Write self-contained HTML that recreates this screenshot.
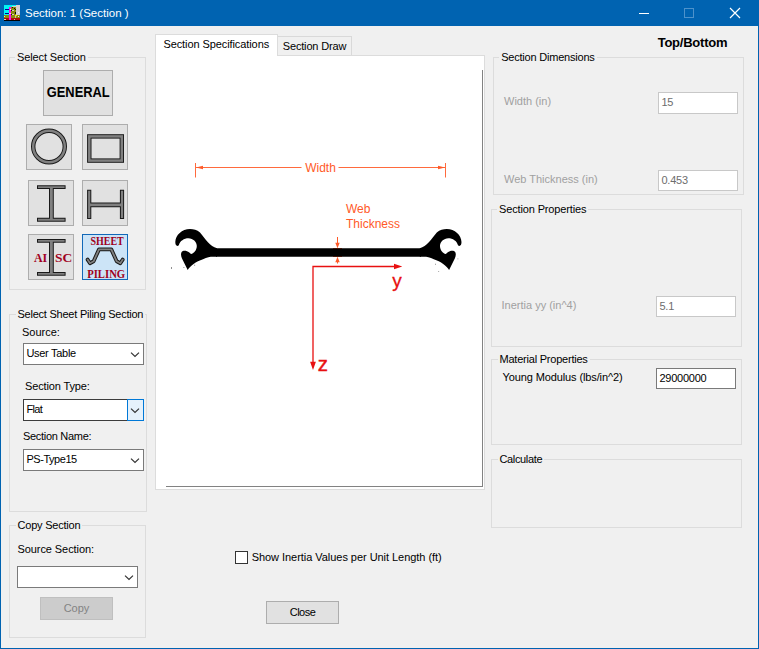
<!DOCTYPE html>
<html><head><meta charset="utf-8"><title>Section: 1 (Section )</title>
<style>
*{box-sizing:border-box;margin:0;padding:0}
html,body{width:759px;height:649px;overflow:hidden;background:#f0f0f0}
body{position:relative;font-family:"Liberation Sans",sans-serif;font-size:11px;color:#000}
.abs{position:absolute}
#titlebar{left:0;top:0;width:759px;height:26px;background:#0063b1}
#title{left:25px;top:5px;color:#fff;font-size:11.5px;white-space:nowrap;line-height:16px}
#bl{left:0;top:26px;width:1px;height:623px;background:#0063b1}
#br{right:0;top:26px;width:1px;height:623px;background:#0063b1}
#bb{left:0;bottom:0;width:759px;height:1px;background:#0063b1}
.grp{position:absolute;border:1px solid #dcdcdc}
.grp>.lg{position:absolute;left:6px;top:-8px;background:#f0f0f0;padding:0 2px;white-space:nowrap;line-height:14px}
.lbl{position:absolute;white-space:nowrap;line-height:14px}
.dis{color:#a0a0a0}
.btn{position:absolute;background:#e1e1e1;border:1px solid #adadad}
.combo{position:absolute;background:#fff;border:1px solid #7a7a7a;height:22px;line-height:19px;padding-left:3px;white-space:nowrap}
.combo svg{position:absolute;right:3.500px;top:8.300px}
.tb{position:absolute;background:#fff;border:1px solid #c8c8c8;height:21px;line-height:18px;padding-left:2.5px;color:#6d6d6d;letter-spacing:-0.25px}
</style></head><body>
<div id="titlebar" class="abs"></div>
<svg class="abs" id="appicon" style="left:4px;top:5px" width="16" height="16" viewBox="0 0 16 16" shape-rendering="crispEdges">
<rect width="16" height="16" fill="#d6cfd0"/>
<rect x="0" y="0" width="12" height="1" fill="#00f0f0"/>
<rect x="0" y="1" width="5" height="9" fill="#00f6f6"/>
<rect x="5" y="1" width="3" height="1" fill="#00f0f0"/>
<rect x="7" y="2" width="5" height="8" fill="#8a8a10"/>
<rect x="8" y="2" width="1" height="1" fill="#101000"/><rect x="10" y="3" width="1" height="1" fill="#101000"/><rect x="11" y="4" width="1" height="1" fill="#101000"/><rect x="7" y="5" width="1" height="1" fill="#101000"/><rect x="11" y="7" width="1" height="2" fill="#101000"/><rect x="7" y="9" width="1" height="1" fill="#101000"/>
<rect x="8" y="5" width="2" height="1" fill="#d8d0c0"/><rect x="8" y="9" width="2" height="1" fill="#d8d0c0"/>
<rect x="1" y="4" width="4" height="1" fill="#000090"/><rect x="1" y="8" width="4" height="1" fill="#000090"/>
<rect x="0" y="10" width="16" height="3" fill="#8c8a10"/>
<rect x="11" y="10" width="2" height="1" fill="#f0f000"/>
<rect x="0" y="11" width="1" height="1" fill="#e0e0c0"/><rect x="14" y="11" width="1" height="1" fill="#e8e8e8"/><rect x="14" y="7" width="1" height="1" fill="#f4f4f4"/><rect x="11" y="11" width="1" height="3" fill="#c8c8a0"/>
<rect x="0" y="13" width="16" height="2" fill="#b00808"/>
<rect x="0" y="14" width="2" height="1" fill="#e0d0c0"/><rect x="10" y="14" width="1" height="1" fill="#d0c0a0"/>
<rect x="5" y="2" width="2" height="13" fill="#ff10e0"/>
<rect x="6" y="4" width="1" height="1" fill="#fff"/><rect x="5" y="8" width="2" height="1" fill="#ffc0f0"/>
<rect x="0" y="15" width="16" height="1" fill="#000"/>
</svg>
<div id="title" class="abs">Section: 1 (Section )</div>
<svg class="abs" style="left:630px;top:0" width="129" height="26" viewBox="0 0 129 26">
<path d="M9 13.5H19" stroke="#fff" stroke-width="1"/>
<rect x="54.5" y="8.5" width="9" height="9" fill="none" stroke="#4d92cb" stroke-width="1"/>
<path d="M100 8L110 18M110 8L100 18" stroke="#fff" stroke-width="1.2"/>
</svg>
<div id="bl" class="abs"></div><div id="br" class="abs"></div><div id="bb" class="abs"></div>

<!-- Select Section -->
<div class="grp" id="g1" style="left:9px;top:57px;width:137px;height:233px"><span class="lg" style="letter-spacing:-0.115px;left:5px">Select Section</span></div>
<div class="btn" id="bgen" style="left:43px;top:70px;width:70px;height:46px;text-align:center;line-height:44px;font-weight:bold;font-size:14px;line-height:43px"><span style="display:inline-block;transform:scaleX(0.92)">GENERAL</span></div>
<div class="btn" id="bcirc" style="left:26px;top:124px;width:46px;height:46px"><svg width="44" height="44"><circle cx="22" cy="21.500" r="15.800" fill="none" stroke="#1a1a1a" stroke-width="4.400"/><circle cx="22" cy="21.500" r="15.800" fill="none" stroke="#808080" stroke-width="2.500"/></svg></div>
<div class="btn" id="brect" style="left:82px;top:124px;width:46px;height:46px"><svg width="44" height="44"><rect x="6.300" y="11.400" width="32.500" height="24.200" fill="none" stroke="#1a1a1a" stroke-width="4.400"/><rect x="6.300" y="11.400" width="32.500" height="24.200" fill="none" stroke="#808080" stroke-width="2.500"/></svg></div>
<div class="btn" id="bI" style="left:28px;top:180px;width:46px;height:46px"><svg width="44" height="44"><path d="M8 6.100H36.600M8 38.800H36.600" fill="none" stroke="#1a1a1a" stroke-width="3.900"/><path d="M22.400 6V39" fill="none" stroke="#1a1a1a" stroke-width="4.800"/><path d="M9 6.100H35.600M9 38.800H35.600" fill="none" stroke="#808080" stroke-width="1.900"/><path d="M22.400 6V39" fill="none" stroke="#808080" stroke-width="2.800"/></svg></div>
<div class="btn" id="bH" style="left:82px;top:180px;width:46px;height:46px"><svg width="44" height="44"><path d="M6.200 8.800V38M39 8.800V38" fill="none" stroke="#1a1a1a" stroke-width="4.200"/><path d="M6.200 23.900H39" fill="none" stroke="#1a1a1a" stroke-width="4.800"/><path d="M6.200 9.800V37M39 9.800V37" fill="none" stroke="#808080" stroke-width="2.200"/><path d="M6.200 23.900H39" fill="none" stroke="#808080" stroke-width="2.800"/></svg></div>
<div class="btn" id="baisc" style="left:28px;top:234px;width:46px;height:46px"><svg width="44" height="44"><path d="M8 5.900H36.600M8 38.900H36.600" fill="none" stroke="#1a1a1a" stroke-width="3.900"/><path d="M22.400 6V39" fill="none" stroke="#1a1a1a" stroke-width="4.800"/><path d="M9 5.900H35.600M9 38.900H35.600" fill="none" stroke="#808080" stroke-width="1.900"/><path d="M22.400 6V39" fill="none" stroke="#808080" stroke-width="2.800"/><text x="5" y="27.200" textLength="13.2" lengthAdjust="spacingAndGlyphs" font-family="Liberation Serif,serif" font-weight="bold" font-size="13.5" fill="#a00020">AI</text><text x="26" y="27.200" textLength="17.2" lengthAdjust="spacingAndGlyphs" font-family="Liberation Serif,serif" font-weight="bold" font-size="13.5" fill="#a00020">SC</text></svg></div>
<div class="btn" id="bsheet" style="left:82px;top:234px;width:46px;height:46px;background:#cce4f7;border-color:#1268b8"><svg width="44" height="44"><text x="7.400" y="9.700" textLength="33.400" lengthAdjust="spacingAndGlyphs" font-family="Liberation Serif,serif" font-weight="bold" font-size="11.5" fill="#a00020">SHEET</text><text x="4.200" y="42.500" textLength="38" lengthAdjust="spacingAndGlyphs" font-family="Liberation Serif,serif" font-weight="bold" font-size="11.5" fill="#a00020">PILING</text><path d="M4.600 24.600 L7 28.200 L10.600 26.300 L16 14.400 L28.300 14.400 L33.700 26.300 L37.300 28.200 L39.700 24.600" fill="none" stroke="#1a1a1a" stroke-width="3.800" stroke-linecap="round" stroke-linejoin="round"/><path d="M4.600 24.600 L7 28.200 L10.600 26.300 L16 14.400 L28.300 14.400 L33.700 26.300 L37.300 28.200 L39.700 24.600" fill="none" stroke="#808080" stroke-width="1.800" stroke-linecap="round" stroke-linejoin="round"/></svg></div>

<!-- Select Sheet Piling Section -->
<div class="grp" id="g2" style="left:9px;top:314px;width:138px;height:198px"><span class="lg" style="letter-spacing:-0.235px;left:5.5px">Select Sheet Piling Section</span></div>
<div class="lbl" id="lsrc" style="left:22px;top:325px">Source:</div>
<div class="combo" id="c1" style="left:23px;top:343px;width:121px;letter-spacing:-0.29px;padding-left:2.4px">User Table<svg width="10" height="6"><path d="M1 0.600L5 4.500L9 0.600" fill="none" stroke="#333" stroke-width="1.200"/></svg></div>
<div class="lbl" id="ltype" style="left:25px;top:379px;letter-spacing:-0.14px">Section Type:</div>
<div class="combo" id="c2" style="left:23px;top:399px;width:121px;border-color:#3c3c3c;letter-spacing:-0.6px;padding-left:2.4px">Flat<span class="abs" style="right:-1px;top:-1px;width:17px;height:22px;background:#e5f1fb;border:1px solid #0078d7"></span><svg width="10" height="6"><path d="M1 0.600L5 4.500L9 0.600" fill="none" stroke="#333" stroke-width="1.200"/></svg></div>
<div class="lbl" id="lname" style="left:23px;top:429px;letter-spacing:-0.3px">Section Name:</div>
<div class="combo" id="c3" style="left:23px;top:449px;width:121px;letter-spacing:-0.45px;padding-left:2.4px">PS-Type15<svg width="10" height="6"><path d="M1 0.600L5 4.500L9 0.600" fill="none" stroke="#333" stroke-width="1.200"/></svg></div>

<!-- Copy Section -->
<div class="grp" id="g3" style="left:9px;top:525px;width:137px;height:113px"><span class="lg" style="letter-spacing:-0.21px;left:5.5px">Copy Section</span></div>
<div class="lbl" id="lss" style="left:17px;top:542px;letter-spacing:-0.08px;left:17.5px">Source Section:</div>
<div class="combo" id="c4" style="left:17px;top:566px;width:121px"><svg width="10" height="6"><path d="M1 0.600L5 4.500L9 0.600" fill="none" stroke="#333" stroke-width="1.200"/></svg></div>
<div class="btn" id="bcopy" style="left:40px;top:597px;width:73px;height:23px;background:#cccccc;border-color:#bfbfbf;color:#838383;text-align:center;line-height:21px">Copy</div>

<!-- Tabs -->
<div class="abs" id="tabpage" style="left:155px;top:55px;width:330px;height:435px;background:#fff;border:1px solid #dcdcdc"></div>
<div class="abs" id="tab2" style="left:276px;top:36px;width:76px;height:19px;background:#f0f0f0;border:1px solid #d9d9d9;border-bottom:none;text-align:center;line-height:18px;letter-spacing:-0.16px;padding-left:1px">Section Draw</div>
<div class="abs" id="tab1" style="left:155px;top:34px;width:123px;height:22px;background:#fff;border:1px solid #dcdcdc;border-bottom:none;text-align:center;line-height:18.5px;letter-spacing:-0.086px;padding-right:0.5px">Section Specifications</div>
<div class="abs" style="left:482px;top:70px;width:1px;height:417px;background:#828282"></div>
<div class="abs" style="left:166px;top:486px;width:317px;height:1px;background:#828282"></div>

<!-- Diagram -->
<svg class="abs" id="diagram" style="left:156px;top:56px" width="326" height="430" viewBox="156 56 326 430">
<g stroke="#ff6a3d" stroke-width="1" fill="none">
<path d="M195.500 163V177.500M445.500 163V177.500M196 167.500H301.500M338.500 167.500H445"/>
</g>
<path d="M196 167.500l7-1.800v3.600zM445 167.500l-7-1.800v3.600z" fill="#ff5a28"/>
<text x="320.500" y="172" text-anchor="middle" font-size="12" fill="#ff5a28" font-family="Liberation Sans,sans-serif">Width</text>
<text x="346" y="213" font-size="12" fill="#ff5a28" font-family="Liberation Sans,sans-serif">Web</text>
<text x="346" y="228" font-size="12" fill="#ff5a28" font-family="Liberation Sans,sans-serif">Thickness</text>
<path d="M337.500 237V244M337.500 261V263.500M333 248.500H342M333 256.500H342" stroke="#ff5a28" fill="none"/>
<path d="M337.500 248.200l-2.200-5.500h4.400zM337.500 256.800l-2.200 5.500h4.400z" fill="#ff5a28"/>
<!-- sheet pile -->
<path d="M216 248.200H421V256.800H216Z" fill="#000"/>
<path d="M217 248.200 C210 246.500 205.500 239 200 232.500 C197 229.500 193.500 229 190 229 C182 229 175.500 235 175.300 242 C175.300 245.500 177.200 246.800 178.800 245.200 C180 241 184 238.300 188.500 238.300 C193 238.300 196.800 242 196.800 246 C196.800 250 194 253.400 191 254 L189 252.300 C187 250.500 183 250 181.600 252 C180.600 254 181 256 182 258.500 L187.700 270 C190 266 196 261.500 203 259.200 C207 257.400 210 256.800 213 256.800 L217 256.800Z" fill="#000"/>
<path d="M217 248.200 C210 246.500 205.500 239 200 232.500 C197 229.500 193.500 229 190 229 C182 229 175.500 235 175.300 242 C175.300 245.500 177.200 246.800 178.800 245.200 C180 241 184 238.300 188.500 238.300 C193 238.300 196.800 242 196.800 246 C196.800 250 194 253.400 191 254 L189 252.300 C187 250.500 183 250 181.600 252 C180.600 254 181 256 182 258.500 L187.700 270 C190 266 196 261.500 203 259.200 C207 257.400 210 256.800 213 256.800 L217 256.800Z" transform="translate(636.800,0) scale(-1,1)" fill="#000"/>
<g fill="#222"><rect x="171" y="267.500" width="1" height="1"/><rect x="183.500" y="267" width="0.800" height="0.800" fill="#555"/><rect x="194.300" y="264.800" width="0.800" height="0.800" fill="#444"/><rect x="435" y="263.800" width="0.800" height="0.800" fill="#555"/><rect x="438.300" y="271" width="0.800" height="0.800" fill="#777"/><rect x="457.500" y="258.500" width="0.800" height="0.800" fill="#777"/></g>
<!-- axes -->
<g stroke="#e81010" stroke-width="1.300" fill="none"><path d="M313 363V266.500H395"/></g>
<path d="M402.300 266.500l-8.300-2.800v5.600zM313 370l-2.900-8.300h5.800z" fill="#e81010"/>
<text x="392.300" y="287" font-size="19" fill="#e81010" stroke="#e81010" stroke-width="0.300" font-family="Liberation Sans,sans-serif">y</text>
<text x="317.800" y="370.800" font-size="20" textLength="10.200" lengthAdjust="spacingAndGlyphs" fill="#e81010" stroke="#e81010" stroke-width="0.400" font-family="Liberation Sans,sans-serif">z</text>
</svg>

<!-- right column -->
<div class="lbl" id="ltb" style="left:657px;top:34px;font-weight:bold;font-size:13px;line-height:18px;letter-spacing:-0.24px;left:657.7px">Top/Bottom</div>
<div class="grp" id="g4" style="left:493px;top:57px;width:251px;height:138px"><span class="lg" style="letter-spacing:-0.21px;left:5.2px">Section Dimensions</span></div>
<div class="lbl dis" id="lw" style="left:504px;top:94px">Width (in)</div>
<div class="tb" id="t1" style="left:658px;top:92px;width:80px;height:22px;line-height:19px">15</div>
<div class="lbl dis" id="lwt" style="left:504px;top:172px">Web Thickness (in)</div>
<div class="tb" id="t2" style="left:658px;top:170px;width:80px">0.453</div>
<div class="grp" id="g5" style="left:491px;top:209px;width:251px;height:138px"><span class="lg" style="letter-spacing:-0.15px;left:5.1px">Section Properties</span></div>
<div class="lbl dis" id="liy" style="left:502px;top:298px;left:501.5px">Inertia yy (in^4)</div>
<div class="tb" id="t3" style="left:656px;top:296px;width:80px">5.1</div>
<div class="grp" id="g6" style="left:491px;top:359px;width:251px;height:86px"><span class="lg" style="letter-spacing:-0.22px;left:5.5px">Material Properties</span></div>
<div class="lbl" id="lym" style="left:502px;top:370px;letter-spacing:-0.12px;left:502.6px">Young Modulus (lbs/in^2)</div>
<div class="tb" id="t4" style="left:656px;top:368px;width:80px;border-color:#7a7a7a;color:#000">29000000</div>
<div class="grp" id="g7" style="left:491px;top:459px;width:251px;height:69px"><span class="lg" style="letter-spacing:-0.35px;left:5.5px">Calculate</span></div>

<!-- bottom -->
<div class="abs" id="chk" style="left:234px;top:551px;width:13px;height:13px;background:#fff;border:1px solid #333;left:235px"></div>
<div class="lbl" id="lchk" style="left:251px;top:550px;letter-spacing:-0.045px;left:251.7px">Show Inertia Values per Unit Length (ft)</div>
<div class="btn" id="bclose" style="left:266px;top:601px;width:73px;height:23px;text-align:center;line-height:21px;letter-spacing:-0.5px">Close</div>
</body></html>
